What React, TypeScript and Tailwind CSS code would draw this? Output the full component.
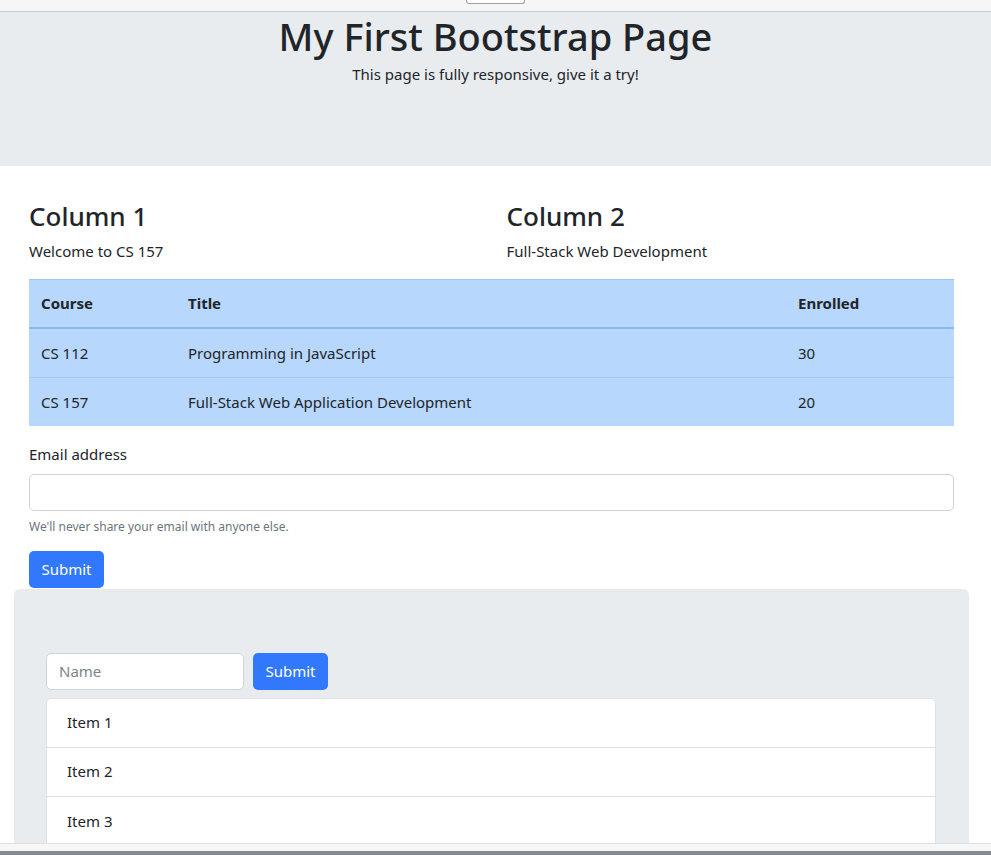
import React from "react";

const rows = [
  { course: "CS 112", title: "Programming in JavaScript", enrolled: "30" },
  { course: "CS 157", title: "Full-Stack Web Application Development", enrolled: "20" },
];

const items = ["Item 1", "Item 2", "Item 3"];

export default function App() {
  return (
    <div
      className="h-[855px] overflow-hidden flex flex-col bg-white text-[#212529]"
      style={{ fontFamily: '"Noto Sans", "Open Sans", sans-serif' }}
    >
      {/* browser strip */}
      <div className="h-[12px] shrink-0 bg-[#f6f6f6] border-b border-[#c9c9c9] flex justify-center">
        <div className="w-[59px] h-[4px] bg-white border border-t-0 border-[#a0a0a0] rounded-b-[3px]" />
      </div>

      {/* jumbotron */}
      <div className="h-[154px] shrink-0 bg-[#e9ecef] text-center">
        <h1 className="text-[38px] leading-[48px] font-medium">My First Bootstrap Page</h1>
        <p className="mt-[2px] text-[15px] leading-6">This page is fully responsive, give it a try!</p>
      </div>

      <div className="pl-[29px] pr-[37px] pt-[32px] shrink-0">
        <div className="grid grid-cols-2 gap-6">
          <div>
            <h2 className="text-[26px] leading-[36px] font-medium">Column 1</h2>
            <p className="mt-[5px] text-[15px] leading-6">Welcome to CS 157</p>
          </div>
          <div className="pl-[3px]">
            <h2 className="text-[26px] leading-[36px] font-medium">Column 2</h2>
            <p className="mt-[5px] text-[15px] leading-6">Full-Stack Web Development</p>
          </div>
        </div>

        <table className="mt-[16px] w-full border-collapse bg-[#b7d7fc] text-[15px] border-t border-[#9ec6f6]">
          <thead>
            <tr className="border-b-2 border-[#8ab8f0]">
              <th className="w-[147px] text-left font-bold px-3 h-[48px]">Course</th>
              <th className="text-left font-bold px-3">Title</th>
              <th className="w-[168px] text-left font-bold px-3">Enrolled</th>
            </tr>
          </thead>
          <tbody>
            {rows.map((r, i) => (
              <tr key={r.course} className={i === 0 ? "border-b border-[#9ec6f6]" : ""}>
                <td className={`px-3 ${i === 0 ? "h-[50px]" : "h-[48px]"}`}>{r.course}</td>
                <td className="px-3">{r.title}</td>
                <td className="px-3">{r.enrolled}</td>
              </tr>
            ))}
          </tbody>
        </table>

        <form className="mt-[16px]" onSubmit={(e) => e.preventDefault()}>
          <label className="block text-[15px] leading-6">Email address</label>
          <input
            type="email"
            className="mt-[8px] block w-full h-[37px] rounded-[5px] border border-[#ced4da] bg-white px-3"
          />
          <div className="mt-[7px] text-[12px] leading-[18px] text-[#6c757d]">
            We'll never share your email with anyone else.
          </div>
          <button className="mt-[15px] block h-[37px] w-[75px] rounded-[5px] bg-[#3178fc] text-white text-[15px]">
            Submit
          </button>
        </form>
      </div>

      {/* second section */}
      <div className="mt-[1px] ml-[14px] mr-[22px] h-[254px] shrink-0 rounded-t-[6px] bg-[#e9ecef] pl-[32px] pr-[33px] pt-[64px] overflow-hidden">
        <div className="flex gap-[9px]">
          <input
            placeholder="Name"
            className="w-[198px] h-[37px] rounded-[5px] border border-[#ced4da] bg-white px-3 text-[15px] placeholder:text-[#7d838a]"
          />
          <button className="h-[37px] w-[75px] rounded-[5px] bg-[#3178fc] text-white text-[15px]">Submit</button>
        </div>
        <ul className="mt-[8px] rounded-t-[5px] border border-[#dee2e6] bg-white">
          {items.map((it, i) => (
            <li
              key={it}
              className={`h-[49px] flex items-center px-5 text-[15px] ${i < 2 ? "border-b border-[#dee2e6]" : ""}`}
            >
              {it}
            </li>
          ))}
        </ul>
      </div>

      <div className="h-[8px] shrink-0 bg-[#f7f7f7] border-t border-[#e0e0e0]" />
      <div className="flex-1 bg-[#858b90]" />
    </div>
  );
}
